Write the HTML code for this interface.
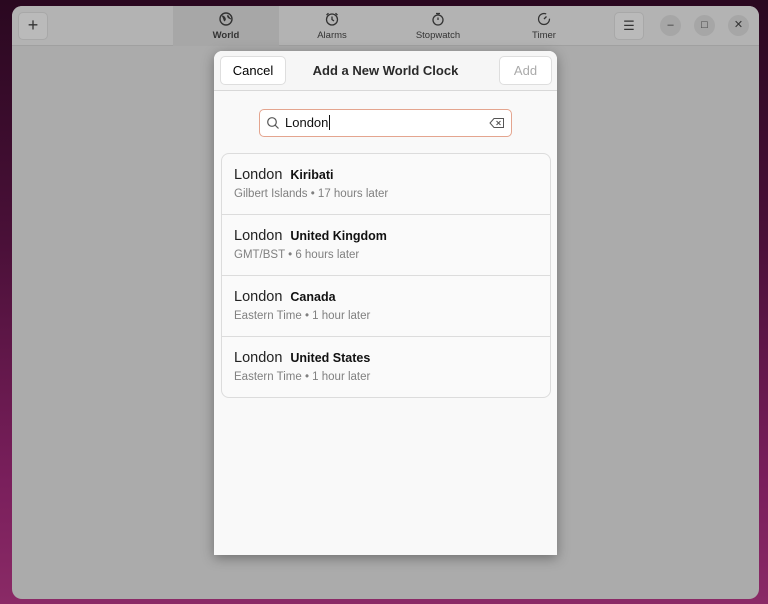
<!DOCTYPE html>
<html><head><meta charset="utf-8"><style>
*{margin:0;padding:0;box-sizing:border-box}
body{width:768px;height:604px;overflow:hidden;font-family:"Liberation Sans","DejaVu Sans",sans-serif;background:linear-gradient(180deg,#2a0820 0%,#4a1038 40%,#7a1f5c 80%,#8a2a66 100%);position:relative}
.win{position:absolute;left:12px;top:6px;width:747px;height:593px;background:#ababab;border-radius:10px;overflow:hidden}
.hdr{position:absolute;left:0;top:0;width:100%;height:40px;background:#b3b3b3;border-bottom:1px solid #a0a0a0}
.btn{position:absolute;background:#bababa;border:1px solid #a8a8a8;border-radius:5px;color:#333;text-align:center}
.tab{position:absolute;top:0;height:40px;text-align:center;font-size:9.5px;color:#333}
.tab svg{display:block;margin:6px auto 4px}
.circ{position:absolute;top:9px;width:21px;height:21px;border-radius:50%;background:#a6a6a6;color:#333;font-size:11px;text-align:center;line-height:21px}
.dlg{position:absolute;left:214px;top:51px;width:343px;height:504px;background:#f9f9f9;border-radius:8px 8px 0 0;box-shadow:0 3px 12px rgba(0,0,0,.35)}
.dh{height:40px;border-bottom:1px solid #d8d8d8;position:relative;background:#f6f6f6;border-radius:8px 8px 0 0}
.db{position:absolute;top:5px;height:29px;background:#fff;border:1px solid #dedede;border-radius:5px;font-size:13px;line-height:27px;text-align:center}
.search{position:absolute;left:45px;top:58px;width:253px;height:28px;border:1.5px solid #e4a58f;border-radius:5px;background:#fff}
.list{position:absolute;left:7px;top:102px;width:330px;height:245px;border:1px solid #dcdcdc;border-radius:8px;background:#fafafa}
.row{height:61px;border-bottom:1px solid #dcdcdc;padding:13px 0 0 12px}
.row:last-child{border-bottom:none}
.t{font-size:14.5px;color:#222}.t b{font-size:12.5px;margin-left:8px;color:#111}
.s{font-size:11.5px;color:#808080;margin-top:5px}
</style></head><body>
<div class="win">
 <div class="hdr">
  <div class="btn" style="left:6px;top:6px;width:30px;height:28px;font-size:18px;line-height:25px">+</div>
  <div class="tab" style="left:161px;width:106px;background:#a7a7a7;font-weight:bold">
   <svg width="14" height="14" viewBox="0 0 14 14"><circle cx="7" cy="7" r="6" fill="none" stroke="#333" stroke-width="1.4"/><path d="M3 4q2 0 3 2t-1 3M9 3q-1 2 1 3t2 1" fill="#333" stroke="#333"/></svg>World</div>
  <div class="tab" style="left:267px;width:106px">
   <svg width="14" height="14" viewBox="0 0 14 14"><circle cx="7" cy="7.5" r="5.5" fill="none" stroke="#333" stroke-width="1.3"/><path d="M7 4.5V7.5L9 9M1.5 3L3.5 1.2M12.5 3L10.5 1.2" fill="none" stroke="#333" stroke-width="1.3"/></svg>Alarms</div>
  <div class="tab" style="left:373px;width:106px">
   <svg width="14" height="14" viewBox="0 0 14 14"><circle cx="7" cy="8" r="5" fill="none" stroke="#333" stroke-width="1.3"/><path d="M5 1.5H9M7 1.5V3M7 5.5V8" fill="none" stroke="#333" stroke-width="1.3"/></svg>Stopwatch</div>
  <div class="tab" style="left:479px;width:106px">
   <svg width="14" height="14" viewBox="0 0 14 14"><circle cx="7" cy="7" r="5.5" fill="none" stroke="#333" stroke-width="1.2" stroke-dasharray="28 6"/><path d="M7 7L9.5 4.5" stroke="#333" stroke-width="1.3"/></svg>Timer</div>
  <div class="btn" style="left:602px;top:6px;width:30px;height:28px;font-size:13px;line-height:26px">☰</div>
  <div class="circ" style="left:648px">–</div>
  <div class="circ" style="left:682px">□</div>
  <div class="circ" style="left:716px">✕</div>
 </div>
</div>
<div class="dlg">
 <div class="dh">
  <div class="db" style="left:6px;width:66px">Cancel</div>
  <div style="position:absolute;left:0;width:343px;top:12px;text-align:center;font-size:13px;font-weight:bold;color:#2a2a2a">Add a New World Clock</div>
  <div class="db" style="left:285px;width:53px;color:#aaa">Add</div>
 </div>
 <div class="search">
  <svg style="position:absolute;left:6px;top:6px" width="14" height="14" viewBox="0 0 14 14"><circle cx="6" cy="6" r="4.3" fill="none" stroke="#555" stroke-width="1.2"/><path d="M9 9L12.5 12.5" stroke="#555" stroke-width="1.2"/></svg>
  <span style="position:absolute;left:25px;top:5px;font-size:13px;color:#111">London<span style="border-left:1px solid #111;margin-left:1px"></span></span>
  <svg style="position:absolute;right:6px;top:7px" width="16" height="12" viewBox="0 0 16 12"><path d="M5 1.5H14.5V10.5H5L1 6Z" fill="none" stroke="#555" stroke-width="1"/><path d="M7.5 4L11.5 8M11.5 4L7.5 8" stroke="#555"/></svg>
 </div>
 <div class="list">
  <div class="row"><div class="t">London<b>Kiribati</b></div><div class="s">Gilbert Islands • 17 hours later</div></div>
  <div class="row"><div class="t">London<b>United Kingdom</b></div><div class="s">GMT/BST • 6 hours later</div></div>
  <div class="row"><div class="t">London<b>Canada</b></div><div class="s">Eastern Time • 1 hour later</div></div>
  <div class="row"><div class="t">London<b>United States</b></div><div class="s">Eastern Time • 1 hour later</div></div>
 </div>
</div>
</body></html>
